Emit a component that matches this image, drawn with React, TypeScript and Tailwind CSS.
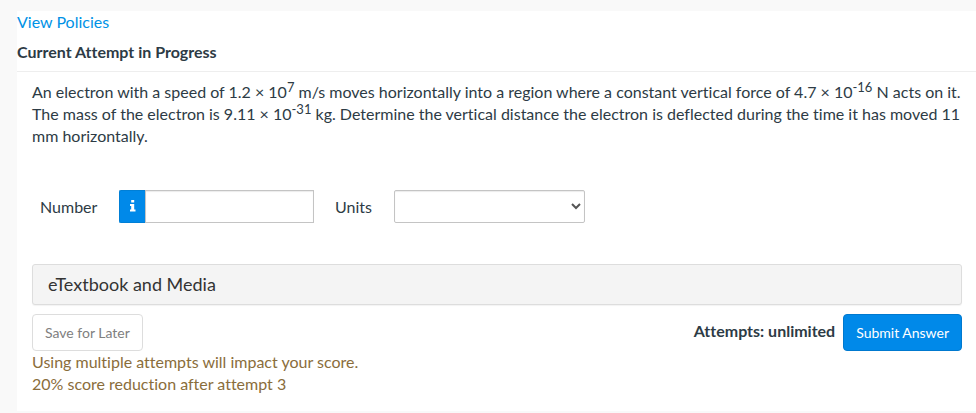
import { useState } from "react"

const UNITS = ["m", "cm", "mm", "km"]

export default function App() {
  const [value, setValue] = useState("")
  const [unit, setUnit] = useState("")

  return (
    <div className="bg-[#f9f9f9] pt-[11px] pl-[17px] pb-1 text-[16px] leading-[22px] text-[#2d3b45] font-['Lato',sans-serif] [font-variant-ligatures:none]">
      <main className="bg-white">
        <header className="border-b border-[#eeeeee] pb-2">
          <a href="#policies" className="block w-fit text-[#0092e6]">
            View Policies
          </a>
          <h1 className="mt-2 font-bold">Current Attempt in Progress</h1>
        </header>

        <section className="pt-[9px] pr-[14px] pl-[15px] pb-4">
          <p>
            An electron with a speed of 1.2 × 10<sup className="text-[13px]">7</sup> m/s moves
            horizontally into a region where a constant vertical force of 4.7 × 10
            <sup className="text-[13px]">-16</sup> N acts on it. The mass of the electron is 9.11 × 10
            <sup className="text-[13px]">-31</sup> kg. Determine the vertical distance the electron is
            deflected during the time it has moved 11 mm horizontally.
          </p>

          <div className="mt-[43px] flex items-center pl-2">
            <label htmlFor="number" className="w-[79px]">Number</label>
            <button
              aria-label="Information"
              className="flex h-[33px] w-[26px] items-center justify-center rounded-l-[2px] border border-r-0 border-[#007fd6] bg-[#0089e9] pb-[2px]"
            >
              <svg width="6" height="12" viewBox="0 0 6 12" fill="white">
                <path d="M1.2 0h3v2.5h-3zM0 4h4.2v5.5H5.5v2H0v-2h1.2V6H0z" />
              </svg>
            </button>
            <input
              id="number"
              value={value}
              onChange={(e) => setValue(e.target.value)}
              className="h-[33px] w-[169px] border border-[#c4c4c4] bg-white px-2 shadow-[inset_0_1px_1px_rgba(0,0,0,0.08)]"
            />
            <label htmlFor="units" className="ml-[21px] w-[59px]">Units</label>
            <select
              id="units"
              value={unit}
              onChange={(e) => setUnit(e.target.value)}
              className="h-[33px] w-[191px] rounded-[2px] border border-[#c4c4c4] bg-white text-[#555555] shadow-[inset_0_1px_1px_rgba(0,0,0,0.08)]"
            >
              <option value=""></option>
              {UNITS.map((u) => (
                <option key={u}>{u}</option>
              ))}
            </select>
          </div>

          <button className="mt-[41px] block h-[41px] w-full rounded-[3px] border border-[#dddddd] bg-[#f4f4f4] px-[15px] pb-[2px] text-left text-[18px] text-[#333333] shadow-[0_1px_1px_rgba(0,0,0,0.05)]">
            eTextbook and Media
          </button>

          <div className="mt-[9px] flex items-center justify-between">
            <button className="h-[37px] rounded-[4px] border border-[#dddddd] px-3 text-[14px] text-[#808080]">
              Save for Later
            </button>
            <div className="flex items-center gap-2">
              <strong className="pb-1 font-bold">Attempts: unlimited</strong>
              <button className="h-[37px] rounded-[4px] border border-[#0079cf] bg-[#0089e9] px-3 text-[14px] text-white">
                Submit Answer
              </button>
            </div>
          </div>

          <p className="text-[#8a6d3b]">
            Using multiple attempts will impact your score.
            <br />
            20% score reduction after attempt 3
          </p>
        </section>
      </main>
    </div>
  )
}
